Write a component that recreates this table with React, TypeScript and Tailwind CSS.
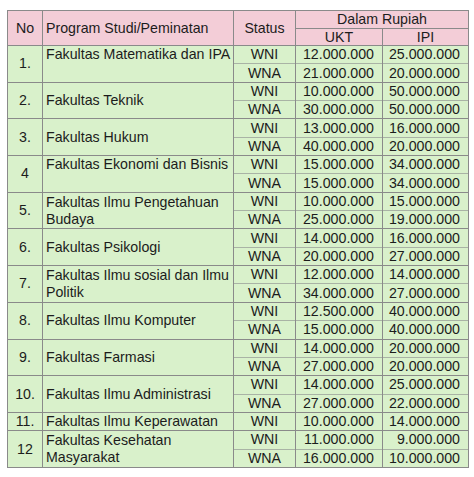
type Row = { status: string; ukt: string; ipi: string }
type Faculty = { no: string; name: React.ReactNode; top?: boolean; rows: Row[] }

const data: Faculty[] = [
  { no: '1.', name: 'Fakultas Matematika dan IPA', top: true, rows: [
    { status: 'WNI', ukt: '12.000.000', ipi: '25.000.000' },
    { status: 'WNA', ukt: '21.000.000', ipi: '20.000.000' },
  ] },
  { no: '2.', name: 'Fakultas Teknik', rows: [
    { status: 'WNI', ukt: '10.000.000', ipi: '50.000.000' },
    { status: 'WNA', ukt: '30.000.000', ipi: '50.000.000' },
  ] },
  { no: '3.', name: 'Fakultas Hukum', rows: [
    { status: 'WNI', ukt: '13.000.000', ipi: '16.000.000' },
    { status: 'WNA', ukt: '40.000.000', ipi: '20.000.000' },
  ] },
  { no: '4', name: 'Fakultas Ekonomi dan Bisnis', top: true, rows: [
    { status: 'WNI', ukt: '15.000.000', ipi: '34.000.000' },
    { status: 'WNA', ukt: '15.000.000', ipi: '34.000.000' },
  ] },
  { no: '5.', name: <>Fakultas Ilmu Pengetahuan<br />Budaya</>, rows: [
    { status: 'WNI', ukt: '10.000.000', ipi: '15.000.000' },
    { status: 'WNA', ukt: '25.000.000', ipi: '19.000.000' },
  ] },
  { no: '6.', name: 'Fakultas Psikologi', rows: [
    { status: 'WNI', ukt: '14.000.000', ipi: '16.000.000' },
    { status: 'WNA', ukt: '20.000.000', ipi: '27.000.000' },
  ] },
  { no: '7.', name: <>Fakultas Ilmu sosial dan Ilmu<br />Politik</>, rows: [
    { status: 'WNI', ukt: '12.000.000', ipi: '14.000.000' },
    { status: 'WNA', ukt: '34.000.000', ipi: '27.000.000' },
  ] },
  { no: '8.', name: 'Fakultas Ilmu Komputer', rows: [
    { status: 'WNI', ukt: '12.500.000', ipi: '40.000.000' },
    { status: 'WNA', ukt: '15.000.000', ipi: '40.000.000' },
  ] },
  { no: '9.', name: 'Fakultas Farmasi', rows: [
    { status: 'WNI', ukt: '14.000.000', ipi: '20.000.000' },
    { status: 'WNA', ukt: '27.000.000', ipi: '20.000.000' },
  ] },
  { no: '10.', name: 'Fakultas Ilmu Administrasi', rows: [
    { status: 'WNI', ukt: '14.000.000', ipi: '25.000.000' },
    { status: 'WNA', ukt: '27.000.000', ipi: '22.000.000' },
  ] },
  { no: '11.', name: 'Fakultas Ilmu Keperawatan', rows: [
    { status: 'WNI', ukt: '10.000.000', ipi: '14.000.000' },
  ] },
  { no: '12', name: <>Fakultas Kesehatan<br />Masyarakat</>, rows: [
    { status: 'WNI', ukt: '11.000.000', ipi: '9.000.000' },
    { status: 'WNA', ukt: '16.000.000', ipi: '10.000.000' },
  ] },
]

export default function App() {
  return (
    <div className="w-[474px] h-[477px] bg-white pl-[7px] pt-[10px] font-['Liberation_Sans',Arial,sans-serif] text-[14.2px] leading-[15px] text-[#1c1c1c]">
      <table className="table-fixed border-collapse w-[461px] border border-[#8a8a8a]">
        <colgroup>
          <col className="w-[35px]" />
          <col className="w-[191px]" />
          <col className="w-[62px]" />
          <col className="w-[87px]" />
          <col className="w-[86px]" />
        </colgroup>
        <thead className="bg-[#f3cdd7]">
          <tr className="h-[18px]">
            <th rowSpan={2} className="border border-[#8a8a8a] font-normal text-center p-0">No</th>
            <th rowSpan={2} className="border border-[#8a8a8a] font-normal text-left pl-[3px] p-0">Program Studi/Peminatan</th>
            <th rowSpan={2} className="border border-[#8a8a8a] font-normal text-center p-0">Status</th>
            <th colSpan={2} className="border border-[#8a8a8a] font-normal text-center p-0">Dalam Rupiah</th>
          </tr>
          <tr className="h-[17px]">
            <th className="border border-[#8a8a8a] font-normal text-center p-0">UKT</th>
            <th className="border border-[#8a8a8a] font-normal text-center p-0">IPI</th>
          </tr>
        </thead>
        <tbody className="bg-[#d9f1cb]">
          {data.map((f) =>
            f.rows.map((r, i) => (
              <tr key={f.no + i} className="h-[18.35px]">
                {i === 0 && (
                  <>
                    <td rowSpan={f.rows.length} className="border border-[#8a8a8a] text-center p-0 align-middle">{f.no}</td>
                    <td rowSpan={f.rows.length} className={`border border-[#8a8a8a] pl-[3px] py-0 pr-0 leading-[17px] ${f.top ? 'align-top' : 'align-middle'}`}>{f.name}</td>
                  </>
                )}
                <td className={`border-x border-[#8a8a8a] text-center p-0 ${i === 0 ? 'border-t' : 'border-t border-t-[#a9b3a5]'}`}>{r.status}</td>
                <td className={`border-x border-[#8a8a8a] text-right pr-[8px] p-0 ${i === 0 ? 'border-t' : 'border-t border-t-[#a9b3a5]'}`}>{r.ukt}</td>
                <td className={`border-x border-[#8a8a8a] text-right pr-[8px] p-0 ${i === 0 ? 'border-t' : 'border-t border-t-[#a9b3a5]'}`}>{r.ipi}</td>
              </tr>
            ))
          )}
        </tbody>
      </table>
    </div>
  )
}
